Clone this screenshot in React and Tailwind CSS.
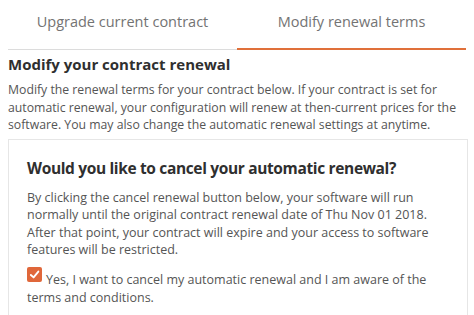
export default function App() {
  return (
    <div className="w-[474px] h-[315px] overflow-hidden bg-white" style={{ fontFamily: '"Open Sans", "Noto Sans", sans-serif' }}>
      <div className="flex mx-2 h-[50px]">
        <div className="flex-1 flex items-center justify-center border-b border-[#dcdcdc] text-[14.5px] text-[#737373] pb-[5px]">
          Upgrade current contract
        </div>
        <div className="flex-1 flex items-center justify-center border-b-2 border-[#e0703a] text-[14.5px] text-[#737373] pb-[5px]">
          Modify renewal terms
        </div>
      </div>
      <div className="px-2">
        <h2 className="text-[15px] font-bold text-[#2f2f2f] leading-[20px] mt-[4px]">Modify your contract renewal</h2>
        <p className="text-[12.25px] text-[#555] leading-[17.5px] mt-[7px]">
          Modify the renewal terms for your contract below. If your contract is set for automatic renewal, your configuration will renew at then-current prices for the software. You may also change the automatic renewal settings at anytime.
        </p>
        <div className="mt-[5px] mr-[-2px] border border-[#e6e6e6] pl-[18px] pr-3 pt-[17px] pb-6">
          <h3 className="text-[15.5px] tracking-[-0.35px] font-bold text-[#2f2f2f] leading-[22px]">Would you like to cancel your automatic renewal?</h3>
          <p className="text-[12.5px] text-[#555] leading-[17.5px] mt-[10px] pr-4">
            By clicking the cancel renewal button below, your software will run normally until the original contract renewal date of Thu Nov 01 2018. After that point, your contract will expire and your access to software features will be restricted.
          </p>
          <p className="text-[12.5px] text-[#555] leading-[18px] mt-[12px] pr-4">
            <span className="inline-flex align-[-1px] w-[15px] h-[15px] bg-[#e0673a] rounded-[2px] items-center justify-center mr-[4px] relative top-[-5px]">
              <svg width="11" height="11" viewBox="0 0 12 12" fill="none">
                <path d="M2 6.5 L5 9.2 L10.2 2.8" stroke="white" strokeWidth="2" strokeLinecap="round" strokeLinejoin="round" />
              </svg>
            </span>
            Yes, I want to cancel my automatic renewal and I am aware of the terms and conditions.
          </p>
        </div>
      </div>
    </div>
  );
}
